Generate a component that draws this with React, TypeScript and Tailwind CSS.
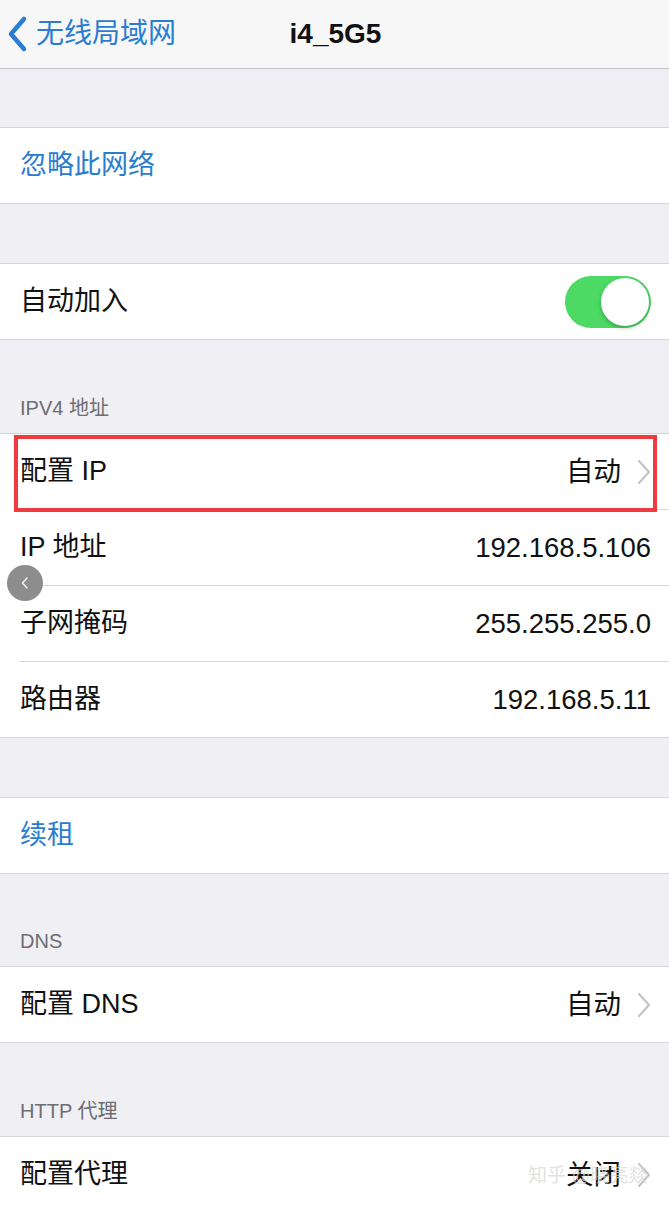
const FONT = { fontFamily: '"Liberation Sans", "Noto Sans CJK SC", sans-serif' }

function Chevron() {
  return (
    <svg width="14" height="26" viewBox="0 0 14 26" className="text-[#c4c4c8]">
      <path d="M2 2 L12 13 L2 24" fill="none" stroke="currentColor" strokeWidth="2.2" strokeLinecap="round" strokeLinejoin="round" />
    </svg>
  )
}

function Row({
  label,
  value,
  chevron,
  blue,
  last,
  children,
}: {
  label: string
  value?: string
  chevron?: boolean
  blue?: boolean
  last?: boolean
  children?: React.ReactNode
}) {
  return (
    <div className="bg-white pl-[20px]">
      <div
        className={
          "flex items-center pr-[18px] " + (last ? "h-[75px]" : "h-[76px] border-b border-[#d6d6da]")
        }
      >
        <span className={"text-[27px] " + (blue ? "text-[#2a7dd0]" : "text-[#111]")}>{label}</span>
        <div className="ml-auto flex items-center gap-[16px]">
          {value && <span className="text-[27.5px] text-[#111]">{value}</span>}
          {chevron && <Chevron />}
          {children}
        </div>
      </div>
    </div>
  )
}

function Group({ children }: { children: React.ReactNode }) {
  return <div className="border-y border-[#d6d6da]">{children}</div>
}

function Header({ text, h }: { text: string; h: string }) {
  return (
    <div className={h + " flex items-end pb-[10px] pl-[20px] text-[20px] text-[#6d6d72]"}>{text}</div>
  )
}

function Toggle() {
  return (
    <div className="w-[86px] h-[52px] rounded-full bg-[#4cd964] flex items-center justify-end p-[2px]">
      <div className="w-[48px] h-[48px] rounded-full bg-white shadow-[0_2px_4px_rgba(0,0,0,0.25)]" />
    </div>
  )
}

export default function App() {
  return (
    <div className="w-[669px] h-[1207px] overflow-hidden bg-[#efeff4] relative" style={FONT}>
      {/* nav */}
      <div className="h-[69px] bg-[#f7f7f8] border-b border-[#c2c2c6] flex items-center relative">
        <div className="flex items-center pl-[6px] text-[#2a7dd0]">
          <svg width="24" height="38" viewBox="0 0 24 38" className="mr-[6px]">
            <path d="M18 4 L5 19 L18 34" fill="none" stroke="currentColor" strokeWidth="4.5" strokeLinecap="round" strokeLinejoin="round" />
          </svg>
          <span className="text-[28px]">无线局域网</span>
        </div>
        <div className="absolute left-1/2 -translate-x-1/2 text-[28px] font-bold text-[#111] ml-[1px]">i4_5G5</div>
      </div>

      <div className="h-[58px]" />
      <Group>
        <Row label="忽略此网络" blue last />
      </Group>

      <div className="h-[59px]" />
      <Group>
        <Row label="自动加入" last>
          <Toggle />
        </Row>
      </Group>

      <Header text="IPV4 地址" h="h-[93px]" />
      <Group>
        <div className="relative">
          <Row label="配置 IP" value="自动" chevron />
          <div className="absolute left-[14px] right-[12px] top-[1px] bottom-[-2px] border-[4px] border-[#ef3b3f] pointer-events-none" />
        </div>
        <Row label="IP 地址" value="192.168.5.106" />
        <Row label="子网掩码" value="255.255.255.0" />
        <Row label="路由器" value="192.168.5.11" last />
      </Group>

      <div className="h-[59px]" />
      <Group>
        <Row label="续租" blue last />
      </Group>

      <Header text="DNS" h="h-[92px]" />
      <Group>
        <Row label="配置 DNS" value="自动" chevron last />
      </Group>

      <Header text="HTTP 代理" h="h-[93px]" />
      <Group>
        <Row label="配置代理" value="关闭" chevron last />
      </Group>

      {/* floating back button overlay */}
      <div className="absolute left-[7px] top-[565px] w-[36px] h-[36px] rounded-full bg-[#8d8d8d] flex items-center justify-center">
        <svg width="12" height="16" viewBox="0 0 12 16">
          <path d="M8 3 L3.5 8 L8 13" fill="none" stroke="#f2f2f2" strokeWidth="1.5" strokeLinecap="round" strokeLinejoin="round" />
        </svg>
      </div>

      {/* watermark */}
      <div className="absolute left-[528px] top-[1162px] text-[19px] text-[#d6d6d6] opacity-70 whitespace-nowrap pointer-events-none">
        知乎 @晓亮燚
      </div>
    </div>
  )
}
